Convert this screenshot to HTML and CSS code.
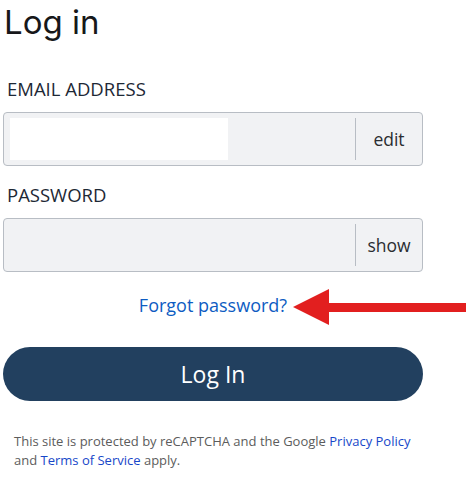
FILE: index.html
```html
<!DOCTYPE html>
<html>
<head>
<meta charset="utf-8">
<link rel="stylesheet" href="styles.css">
</head>
<body>
<div class="page">
  <h1 class="title">Log in</h1>
  <form class="form">
    <label class="label">EMAIL ADDRESS</label>
    <div class="field">
      <div class="field-input"><span class="autofill"></span></div>
      <span class="field-action">edit</span>
    </div>
    <label class="label label-second">PASSWORD</label>
    <div class="field">
      <div class="field-input"></div>
      <span class="field-action">show</span>
    </div>
    <div class="forgot-row">
      <a class="forgot" href="#">Forgot password?</a>
    </div>
    <button class="submit" type="button">Log In</button>
  </form>
  <p class="legal">This site is protected by reCAPTCHA and the Google <a href="#">Privacy Policy</a> and <a href="#">Terms of Service</a> apply.</p>
  <svg class="arrow" width="174" height="40" viewBox="0 0 174 40">
    <polygon points="1,19 37,1 37,37" fill="#e21f1f"/>
    <rect x="35" y="15" width="139" height="9" fill="#e21f1f"/>
  </svg>
</div>
</body>
</html>
```

FILE: styles.css
```css
html, body {
  margin: 0;
  padding: 0;
  background: #ffffff;
}

.page {
  position: relative;
  width: 420px;
  padding: 0 0 0 3px;
  font-family: "Open Sans", "Liberation Sans", sans-serif;
  color: #1b2430;
}

.title {
  margin: 0;
  padding: 2px 0 0 1px;
  font-family: Inter, "Open Sans", sans-serif;
  font-size: 33px;
  font-weight: 400;
  line-height: normal;
  color: #17181a;
}

.form {
  display: flex;
  flex-direction: column;
  margin-top: 36px;
}

.label {
  display: block;
  padding-left: 4px;
  font-size: 18.5px;
  line-height: 22px;
  color: #1d2835;
  margin-bottom: 12px;
}

.label-second {
  margin-top: 18px;
}

.field {
  box-sizing: border-box;
  height: 54px;
  display: flex;
  align-items: stretch;
  border: 1px solid #b8bdc4;
  border-radius: 4px;
  background: #f1f2f4;
  padding: 5px 0;
}

.field-input {
  flex: 1;
  display: flex;
  padding-left: 6px;
}

.autofill {
  width: 218px;
  background: #ffffff;
}

.field-action {
  display: flex;
  align-items: center;
  justify-content: center;
  width: 66px;
  border-left: 1px solid #b8bdc4;
  font-size: 17.5px;
  color: #2a2d31;
}

.forgot-row {
  margin-top: 21px;
  line-height: 24px;
  text-align: center;
}

.forgot {
  font-size: 18px;
  color: #0d5cc2;
  text-decoration: none;
}

.submit {
  margin-top: 29px;
  height: 54px;
  width: 420px;
  border: none;
  border-radius: 27px;
  background: #22405f;
  color: #ffffff;
  font-family: "Open Sans", "Liberation Sans", sans-serif;
  font-size: 23px;
  font-weight: 500;
  padding: 0;
}

.legal {
  margin: 31px 0 0 11px;
  font-family: "Open Sans", "Liberation Sans", sans-serif;
  font-size: 13px;
  line-height: 19px;
  color: #5c5c5c;
  width: 400px;
}

.legal a {
  color: #1747c9;
  text-decoration: none;
}

.arrow {
  position: absolute;
  left: 292px;
  top: 288px;
  display: block;
}
```
